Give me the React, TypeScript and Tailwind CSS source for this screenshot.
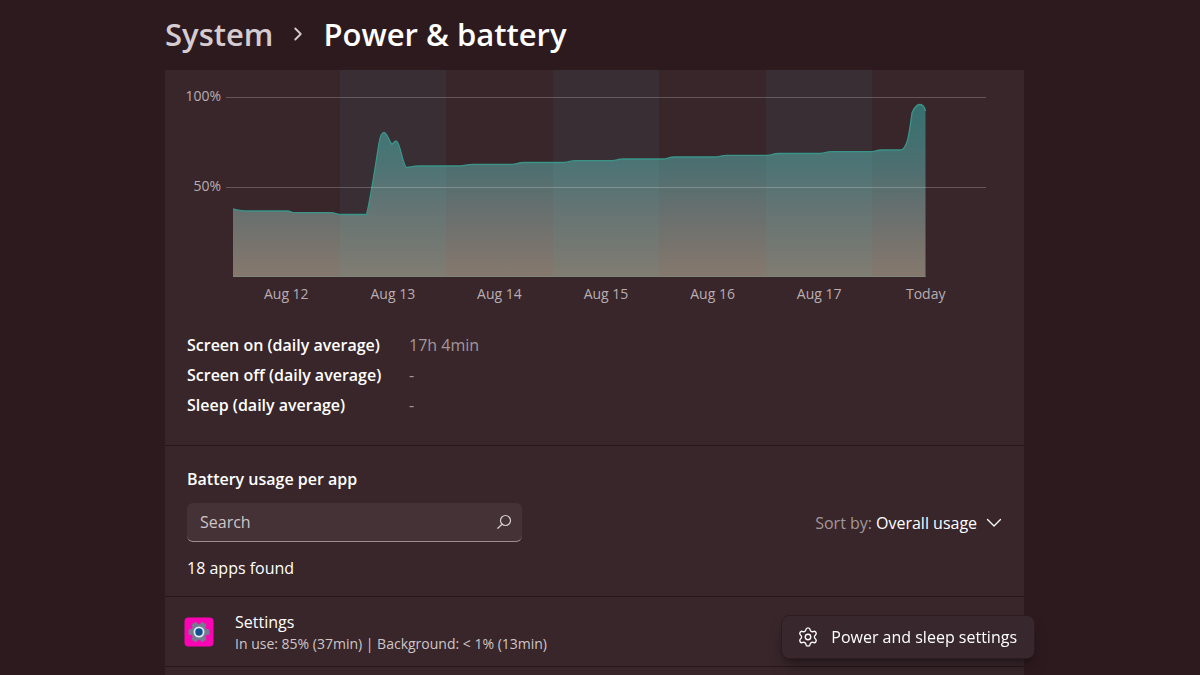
import { ChevronRight, Settings } from "lucide-react";

const days = ["Aug 12", "Aug 13", "Aug 14", "Aug 15", "Aug 16", "Aug 17", "Today"];

const averages = [
  { label: "Screen on (daily average)", value: "17h 4min" },
  { label: "Screen off (daily average)", value: "-" },
  { label: "Sleep (daily average)", value: "-" },
];

const levelLine =
  "M7 139 C10 139.5 14 141 20 141 H61 C65 141 65 142.7 70 142.7 H105 C110 142.7 110 144.5 116 144.5 H140.5 " +
  "C144 132 149 99 153 73 C154.5 65 156.5 62.5 158 62.5 C161 62.5 163 71 166 74.5 C168 72 168.500 71 170 71 " +
  "C174 71 176 92 180 97.300 C184 97.500 186 96 193 96 H234 C240 96 240 94.300 247 94.300 H286 C291 94.300 291 92.500 298 92.500 " +
  "H338 C343 92.500 343 90.700 350 90.700 H386 C391 90.700 391 89 397 89 H437 C442 89 442 87 449 87 H490 C495 87 495 85.300 501 85.300 " +
  "H541 C546 85.300 546 83.500 553 83.500 H594 C599 83.500 599 81.700 606 81.700 H646 C650 81.700 650 80 656 80 H674 " +
  "C682 80 683.500 60 686 43 C688 38 691 34.500 694 34.500 C696.500 34.500 698.500 37 699.500 41";

function LevelChart() {
  return (
    <svg
      viewBox="0 0 798 207"
      preserveAspectRatio="none"
      className="block h-[207px] min-w-0 flex-1"
      role="img"
      aria-label="Battery level"
    >
      <defs>
        <linearGradient id="level" gradientUnits="userSpaceOnUse" x1="0" y1="34" x2="0" y2="207">
          <stop offset="0" stopColor="#36716f" />
          <stop offset="0.35" stopColor="#4c6f70" />
          <stop offset="0.58" stopColor="#646f6f" />
          <stop offset="0.8" stopColor="#76736d" />
          <stop offset="1" stopColor="#86796e" />
        </linearGradient>
      </defs>
      <g fill="#392e34">
        <rect x="114" y="0" width="106" height="207" />
        <rect x="327" y="0" width="106" height="207" />
        <rect x="540" y="0" width="106" height="207" />
      </g>
      <path d={levelLine + " V207 H7 Z"} fill="url(#level)" />
      <g fill="#5c9aa0" fillOpacity="0.12">
        <path d="M114 144.500 H140.500 L153 73 L158 62.500 L166 74.500 L170 71 L180 97 L220 96 V207 H114 Z" />
        <path d="M327 92.500 H338 L350 90.700 H386 L397 89 H433 V207 H327 Z" />
        <path d="M540 85.300 L553 83.500 H594 L606 81.700 H646 V207 H540 Z" />
      </g>
      <path d={levelLine} fill="none" stroke="#3a9488" strokeWidth="1.3" />
      <path d="M7 206.500 H699.500" stroke="#7d8679" strokeWidth="1" />
      <g stroke="#ffffff" strokeOpacity="0.22">
        <path d="M0 27.500 H760" />
        <path d="M0 117.500 H760" />
      </g>
    </svg>
  );
}

function SearchIcon() {
  return (
    <svg viewBox="0 0 16 16" className="size-4 shrink-0" fill="none" stroke="#d8cfd1" strokeWidth="1.2" strokeLinecap="round" aria-hidden="true">
      <circle cx="9.500" cy="6.500" r="5" />
      <path d="M6 10.200 L1.800 14.300" />
    </svg>
  );
}

function DropDownIcon() {
  return (
    <svg viewBox="0 0 16 16" className="ml-2 size-4 shrink-0" fill="none" stroke="currentColor" strokeWidth="1.300" strokeLinecap="round" strokeLinejoin="round" aria-hidden="true">
      <path d="M1.500 4.500 L8 11 L14.500 4.500" />
    </svg>
  );
}

function SettingsAppIcon() {
  return (
    <svg viewBox="0 0 30 30" className="size-[30px] shrink-0" aria-hidden="true">
      <rect x="0.500" y="0.500" width="29" height="29" rx="4" fill="#fb04b4" />
      <g fill="#77798f">
        <circle cx="15" cy="15" r="8" />
        {[30, 90, 150].map((angle) => (
          <rect key={angle} x="12" y="4.500" width="6" height="21" rx="1.500" transform={`rotate(${angle} 15 15)`} />
        ))}
      </g>
      <circle cx="15" cy="15" r="4.600" fill="#12508e" stroke="#dbe9f3" strokeWidth="1.800" />
    </svg>
  );
}

export default function App() {
  return (
    <div className="flex min-h-screen flex-col bg-[#2d1a1f] pr-[176px] pl-[165px] font-['Open_Sans','Noto_Sans',sans-serif] text-base leading-6 text-white">
      <nav aria-label="Breadcrumb" className="flex h-[70px] items-center pb-[2px] text-[31px] leading-10 font-semibold">
        <a href="#system" className="text-[#d6cccf]">
          System
        </a>
        <ChevronRight className="mx-[14px] size-[22px] text-[#d6cccf]" strokeWidth={2} aria-hidden="true" />
        <h1>Power &amp; battery</h1>
      </nav>

      <main className="flex flex-1 flex-col bg-[#38262b]">
        <section aria-label="Battery levels" className="border-b border-[#27171b] pb-7">
          <div className="flex">
            <div className="flex w-[61px] flex-col items-end gap-[70px] pt-4 pr-[5px] text-sm leading-5 text-[#b9adb0]">
              <span>100%</span>
              <span>50%</span>
            </div>
            <LevelChart />
          </div>
          <div className="grid grid-cols-7 pt-[7px] pr-[45px] pl-[68px] text-center text-sm leading-5 text-[#b9adb0]">
            {days.map((day) => (
              <span key={day}>{day}</span>
            ))}
          </div>
          <dl className="flex flex-col gap-[6px] pt-[29px] pl-[22px]">
            {averages.map(({ label, value }) => (
              <div key={label} className="flex">
                <dt className="w-[222px] font-semibold">{label}</dt>
                <dd className="text-[#a4979a]">{value}</dd>
              </div>
            ))}
          </dl>
        </section>

        <section aria-label="Battery usage per app">
          <div className="border-b border-[#27171b] px-[22px] pt-[21px] pb-4">
            <h2 className="font-semibold">Battery usage per app</h2>
            <div className="flex items-center justify-between pt-3">
              <label className="flex h-[39px] w-[335px] items-center rounded-md border-b border-[#9c8e91] bg-[#443236] pr-[10px] pl-[13px]">
                <input
                  type="text"
                  aria-label="Search apps"
                  placeholder="Search"
                  className="min-w-0 flex-1 bg-transparent outline-none placeholder:text-[#cfc5c7]"
                />
                <SearchIcon />
              </label>
              <div className="flex items-center">
                <label htmlFor="sort" className="pr-1 text-[#a4979a]">
                  Sort by:
                </label>
                <select id="sort" className="appearance-none bg-transparent text-white outline-none">
                  <option>Overall usage</option>
                </select>
                <DropDownIcon />
              </div>
            </div>
            <p className="pt-[14px]">18 apps found</p>
          </div>
          <ul>
            <li className="flex h-[70px] items-center gap-[21px] border-b border-[#27171b] pl-[19px]">
              <SettingsAppIcon />
              <div>
                <p>Settings</p>
                <p className="text-sm leading-5 text-[#cfc5c7]">In use: 85% (37min) | Background: &lt; 1% (13min)</p>
              </div>
            </li>
          </ul>
        </section>
      </main>

      <button
        type="button"
        className="fixed right-[165px] bottom-4 flex h-11 items-center gap-3 rounded-lg border border-[#2c1c21] bg-[#38282d] pr-[17px] pl-[15px] shadow-lg shadow-black/30"
      >
        <Settings className="size-[22px]" strokeWidth={1.5} aria-hidden="true" />
        Power and sleep settings
      </button>
    </div>
  );
}
